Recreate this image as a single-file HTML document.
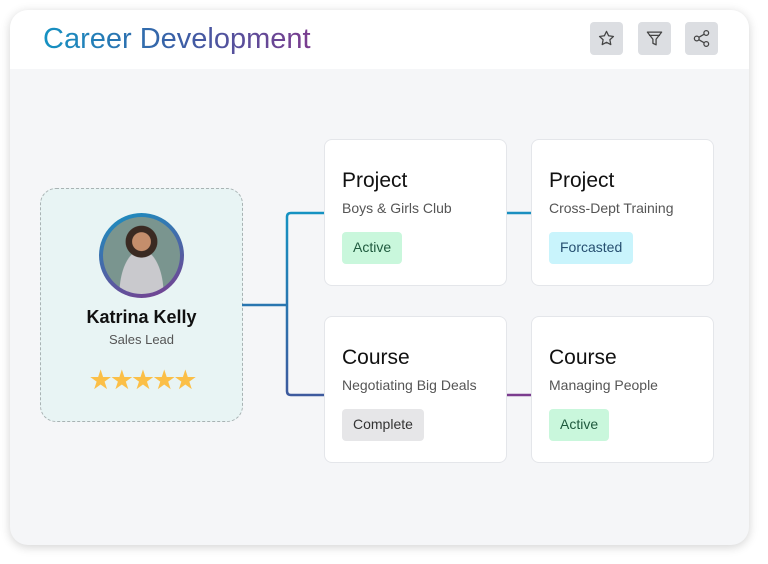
<!DOCTYPE html>
<html><head><meta charset="utf-8"><style>
*{margin:0;padding:0;box-sizing:border-box}
body{width:768px;height:564px;background:#fff;font-family:"Liberation Sans",sans-serif;position:relative;overflow:hidden}
.card{position:absolute;left:10px;top:10px;width:739px;height:535px;border-radius:18px;background:#f5f6f8;box-shadow:0 2px 10px rgba(0,0,0,.18);overflow:hidden}
.hdr{position:absolute;left:0;top:0;width:100%;height:59px;background:#fff}
.title{position:absolute;left:33px;top:13px;font-size:29px;background:linear-gradient(90deg,#1592c2,#3a5fa6 50%,#7b3c8e);-webkit-background-clip:text;background-clip:text;color:transparent;letter-spacing:0px}
.btn{position:absolute;top:12px;width:33px;height:33px;border-radius:4px;background:#dcdee2;display:flex;align-items:center;justify-content:center}
.person{position:absolute;left:30px;top:178px;width:203px;height:234px;border:1.5px dashed #a9b3b4;border-radius:16px;background:#e8f4f4}
.av{position:absolute;left:58px;top:24px;width:85px;height:85px;border-radius:50%;background:linear-gradient(160deg,#1592c2,#7b3c8e);padding:4px}
.av div{width:100%;height:100%;border-radius:50%;background:radial-gradient(circle at 50% 32%,#c48e6c 0 14%,#3a2a22 15% 24%,transparent 25%),radial-gradient(ellipse at 50% 100%,#c9c9cd 0 40%,transparent 41%),#7a958f}
.name{position:absolute;top:118px;width:100%;text-align:center;font-size:18px;font-weight:bold;color:#111}
.role{position:absolute;top:143px;width:100%;text-align:center;font-size:13px;color:#555}
.stars{position:absolute;top:176px;width:100%;text-align:center;font-size:27px;color:#fbbf47;letter-spacing:-3px}
.t{position:absolute;width:183px;height:147px;background:#fff;border:1px solid #e4e6ea;border-radius:8px}
.t h3{position:absolute;left:17px;top:29px;font-size:21px;font-weight:normal;color:#111}
.t p{position:absolute;left:17px;top:60px;font-size:14px;color:#555}
.b{position:absolute;left:17px;top:92px;height:32px;padding:0 11px;line-height:31px;border-radius:4px;font-size:14px}
.ln{position:absolute}
</style></head><body>
<div class="card">
<div class="hdr">
<div class="title">Career Development</div>
<div class="btn" style="left:580px"><svg width="19" height="19" viewBox="0 0 24 24" fill="none" stroke="#444" stroke-width="1.6" stroke-linejoin="round"><path d="M12 3l2.7 5.6 6.1.8-4.5 4.2 1.1 6.1L12 16.8 6.6 19.7l1.1-6.1-4.5-4.2 6.1-.8z"/></svg></div>
<div class="btn" style="left:628px"><svg width="19" height="19" viewBox="0 0 24 24" fill="none" stroke="#444" stroke-width="1.6" stroke-linejoin="round"><path d="M3 4h18l-7 9v7l-4-2v-5z"/><path d="M5 8h14"/></svg></div>
<div class="btn" style="left:675px"><svg width="19" height="19" viewBox="0 0 24 24" fill="none" stroke="#444" stroke-width="1.6"><circle cx="18" cy="5" r="3"/><circle cx="6" cy="12" r="3"/><circle cx="18" cy="19" r="3"/><path d="M8.6 10.5l6.8-4M8.6 13.5l6.8 4"/></svg></div>
</div>
<div class="person">
<div class="av"><div></div></div>
<div class="name">Katrina Kelly</div>
<div class="role">Sales Lead</div>
<div class="stars">★★★★★</div>
</div>
<svg class="ln" style="left:0;top:0" width="739" height="535"><path d="M232 295H277M314 203H281Q277 203 277 207V381Q277 385 281 385H314" fill="none" stroke="url(#g)" stroke-width="2.5"/><path d="M497 203H521" stroke="#1a8fc0" stroke-width="2.5"/><path d="M497 385H521" stroke="#7b3c8e" stroke-width="2.5"/><defs><linearGradient id="g" x1="0" y1="203" x2="0" y2="385" gradientUnits="userSpaceOnUse"><stop offset="0" stop-color="#1592c2"/><stop offset="1" stop-color="#3d5a9e"/></linearGradient></defs></svg>
<div class="t" style="left:314px;top:129px"><h3>Project</h3><p>Boys &amp; Girls Club</p><div class="b" style="background:#c9f7dc;color:#1f5a3e">Active</div></div>
<div class="t" style="left:521px;top:129px"><h3>Project</h3><p>Cross-Dept Training</p><div class="b" style="background:#c9f4fc;color:#264f70">Forcasted</div></div>
<div class="t" style="left:314px;top:306px"><h3>Course</h3><p>Negotiating Big Deals</p><div class="b" style="background:#e6e6e8;color:#333">Complete</div></div>
<div class="t" style="left:521px;top:306px"><h3>Course</h3><p>Managing People</p><div class="b" style="background:#c9f7dc;color:#1f5a3e">Active</div></div>
</div>
</body></html>
